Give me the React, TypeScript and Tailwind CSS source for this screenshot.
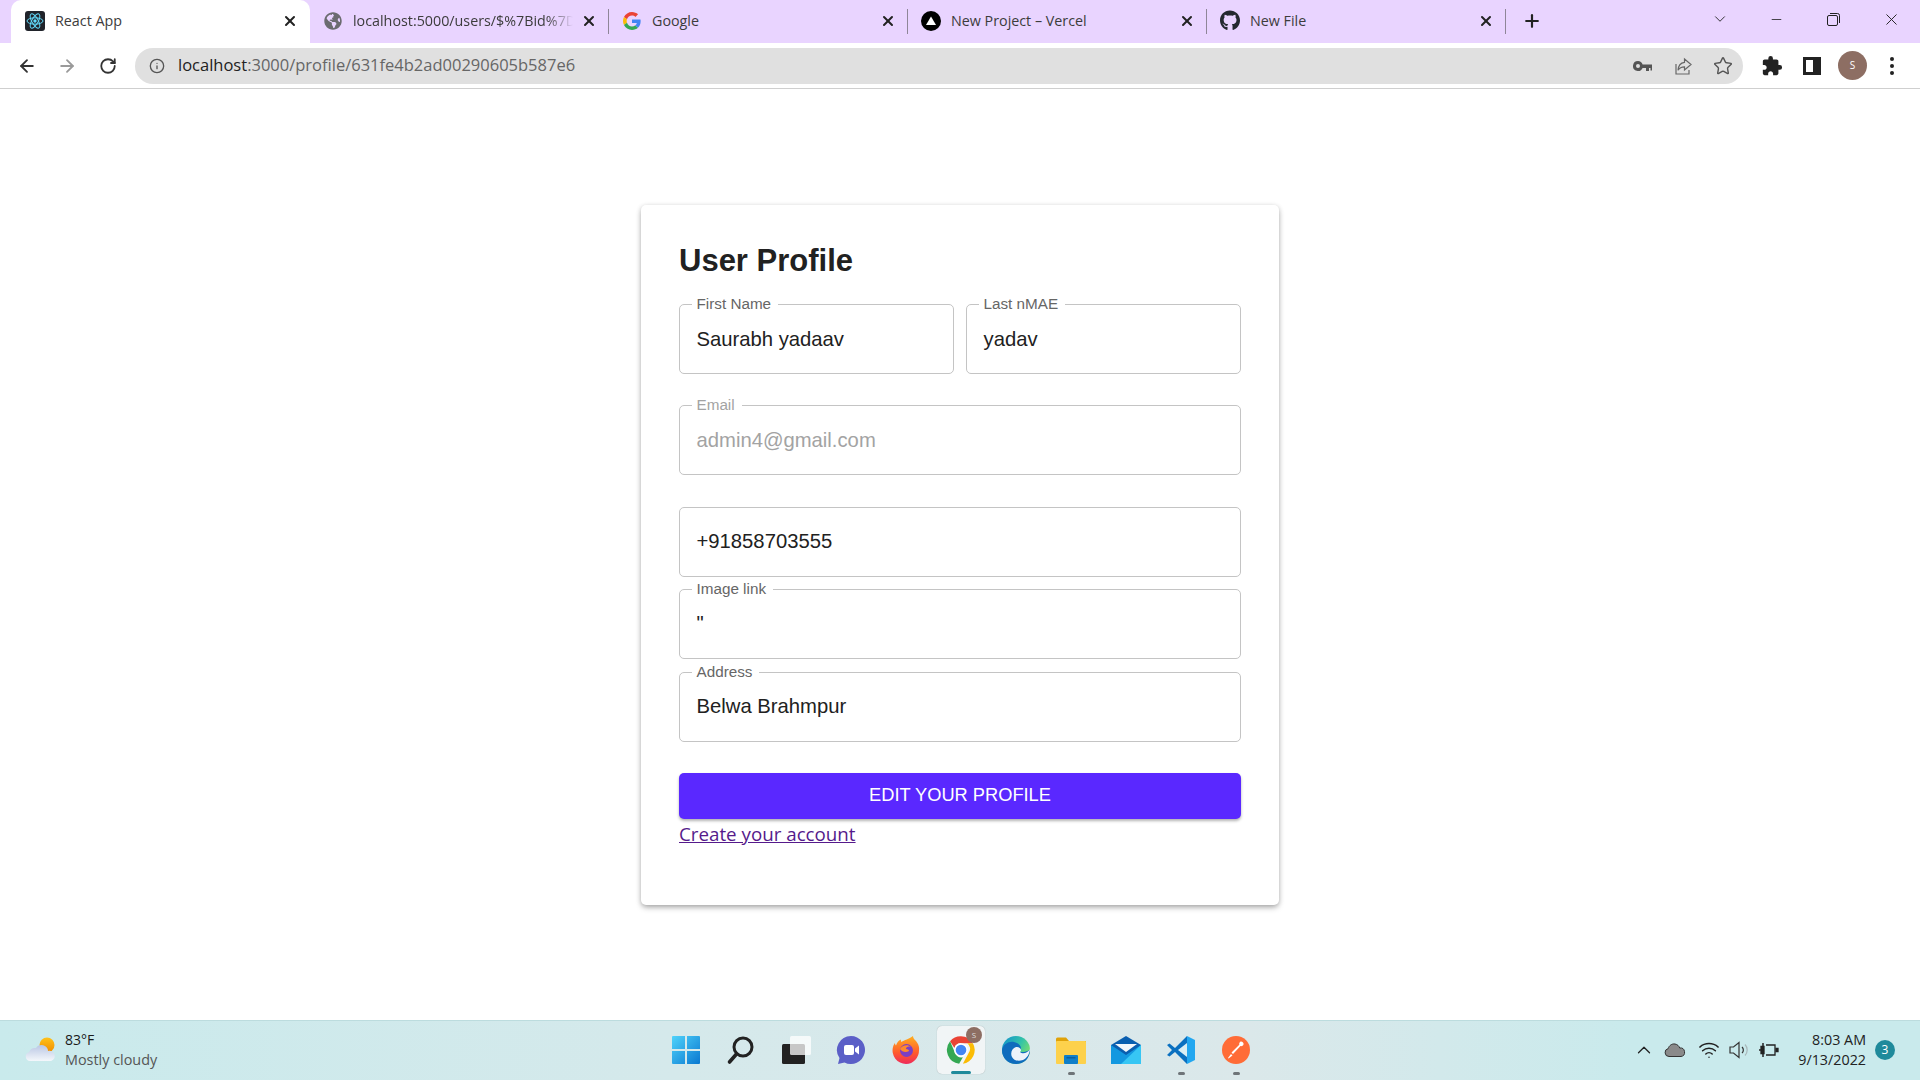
import { X, Plus, Minus, ArrowLeft, ArrowRight, RotateCw, Info, Star, ChevronDown, ChevronUp, Wifi } from "lucide-react";
import { FaGithub, FaGlobeAmericas } from "react-icons/fa";
import { MdExtension } from "react-icons/md";

const uiFont = "font-['Open_Sans',sans-serif]";
const formFont = "font-['Liberation_Sans',sans-serif]";

function ReactIcon() {
  return (
    <svg width="20" height="20" viewBox="0 0 20 20" className="rounded-[3px] bg-[#20232a]">
      <g fill="none" stroke="#61dafb" strokeWidth="1">
        <ellipse cx="10" cy="10" rx="8" ry="3.2" />
        <ellipse cx="10" cy="10" rx="8" ry="3.2" transform="rotate(60 10 10)" />
        <ellipse cx="10" cy="10" rx="8" ry="3.2" transform="rotate(120 10 10)" />
      </g>
      <circle cx="10" cy="10" r="1.7" fill="#61dafb" />
    </svg>
  );
}

function GoogleIcon() {
  return (
    <svg width="18" height="18" viewBox="0 0 48 48">
      <path fill="#EA4335" d="M24 9.5c3.5 0 6.700 1.200 9.200 3.600l6.900-6.900C35.900 2.400 30.500 0 24 0 14.600 0 6.500 5.400 2.600 13.200l8 6.200C12.500 13.700 17.800 9.500 24 9.500z" />
      <path fill="#4285F4" d="M47 24.500c0-1.600-.1-3.100-.4-4.500H24v9h12.900c-.6 3-2.200 5.500-4.700 7.200l7.700 6c4.500-4.200 7.100-10.300 7.100-17.700z" />
      <path fill="#FBBC05" d="M10.500 28.600c-.5-1.400-.8-3-.8-4.600s.3-3.200.8-4.600l-8-6.200C.9 16.500 0 20.100 0 24s.9 7.500 2.600 10.800l7.900-6.200z" />
      <path fill="#34A853" d="M24 48c6.500 0 11.900-2.100 15.900-5.800l-7.700-6c-2.200 1.500-4.900 2.300-8.200 2.300-6.200 0-11.500-4.200-13.400-9.900l-8 6.200C6.500 42.600 14.600 48 24 48z" />
    </svg>
  );
}

function VercelIcon() {
  return (
    <svg width="20" height="20" viewBox="0 0 20 20">
      <circle cx="10" cy="10" r="10" fill="#000" />
      <path d="M10 5.500 15 14H5z" fill="#fff" />
    </svg>
  );
}

function Tab({ icon, title, active, last, fade }: { icon: React.ReactNode; title: string; active?: boolean; last?: boolean; fade?: boolean }) {
  return (
    <div className={`relative flex h-[43px] w-[299px] shrink-0 items-center pb-[2px] pr-[12px] ${active ? "rounded-t-[10px] bg-white pl-[14px]" : "pl-[13px]"}`}>
      <span className="flex w-[20px] shrink-0 items-center justify-center">{icon}</span>
      <span className={`ml-[10px] min-w-0 flex-1 overflow-hidden whitespace-nowrap text-[14.3px] text-[#3c3c3c] ${fade ? "[mask-image:linear-gradient(90deg,#000_88%,transparent)]" : ""}`}>
        {title}
      </span>
      <X size={16} strokeWidth={3} className="ml-[8px] shrink-0 text-[#222]" />
      {!active && !last && <span className="absolute right-0 top-[9px] h-[25px] w-px bg-[#8f8698]" />}
    </div>
  );
}

function TabStrip() {
  return (
    <div className={`flex h-[43px] items-end bg-[#e9d4ff] pl-[11px] ${uiFont}`}>
      <Tab active icon={<ReactIcon />} title="React App" />
      <Tab fade icon={<FaGlobeAmericas size={18} className="text-[#6b6b70]" />} title="localhost:5000/users/$%7Bid%7D" />
      <Tab icon={<GoogleIcon />} title="Google" />
      <Tab icon={<VercelIcon />} title="New Project – Vercel" />
      <Tab icon={<FaGithub size={21} className="text-[#24292f]" />} title="New File" />
      <div className="flex h-[43px] w-[51px] shrink-0 items-center justify-center pb-[2px]">
        <Plus size={20} strokeWidth={2.6} className="text-[#222]" />
      </div>
      <div className="ml-auto flex h-[43px] items-center pb-[5px] text-[#222]">
        <ChevronDown size={18} strokeWidth={1.2} className="mr-[40px]" />
        <Minus size={15} strokeWidth={1.3} className="mr-[43px]" />
        <svg width="13" height="13" viewBox="0 0 13 13" fill="none" stroke="#222" className="mr-[42px]">
          <rect x="0.500" y="2.500" width="10" height="10" rx="1.500" />
          <path d="M3 .5h7.500a2 2 0 0 1 2 2V10" />
        </svg>
        <X size={19} strokeWidth={1.2} className="mr-[19px]" />
      </div>
    </div>
  );
}

function Toolbar() {
  return (
    <div className={`flex h-[46px] items-center border-b border-[#cfcfcf] bg-white ${uiFont}`}>
      <ArrowLeft size={20} strokeWidth={2.2} className="ml-[17px] text-[#333]" />
      <ArrowRight size={20} strokeWidth={2.2} className="ml-[20px] text-[#9a9a9a]" />
      <RotateCw size={18} strokeWidth={2.4} className="ml-[22px] text-[#333]" />
      <div className="ml-[18px] flex h-[36px] w-[1608px] items-center rounded-full bg-[#e0e0e0] pl-[14px] pr-[10px]">
        <Info size={16} strokeWidth={2} className="text-[#555]" />
        <span className="ml-[13px] text-[16.5px] text-[#666]">
          <span className="text-[#222]">localhost</span>:3000/profile/631fe4b2ad00290605b587e6
        </span>
        <svg width="20" height="12" viewBox="0 0 20 12" className="ml-auto text-[#555]" fill="currentColor">
          <path d="M5 1a5 5 0 1 0 4.600 7H13v3h3V8h1.500v2.500H19V4.500H9.600A5 5 0 0 0 5 1zm0 3a2 2 0 1 1 0 4 2 2 0 0 1 0-4z" />
        </svg>
        <svg width="20" height="20" viewBox="0 0 20 20" fill="none" stroke="#666" strokeWidth="1.200" className="ml-[20px]">
          <path d="M3 8v10h13v-4" />
          <path d="M11.500 3 18 8.500 11.500 14v-3.200c-3 0-5 .9-6.500 3.500.3-4.500 2.600-7.500 6.500-8z" />
        </svg>
        <Star size={20} strokeWidth={1.7} className="ml-[20px] text-[#555]" />
      </div>
      <MdExtension size={22} className="ml-[18px] text-[#222]" />
      <div className="ml-[20px] flex h-[18px] w-[18px] items-center justify-center border-[3px] border-[#222] bg-white pr-0">
        <span className="ml-auto h-full w-[5px] bg-[#222]" />
      </div>
      <div className="ml-[17px] flex h-[29px] w-[29px] items-center justify-center rounded-full bg-[#8d6e63] text-[10px] text-white">
        S
      </div>
      <div className="ml-[23px] flex flex-col gap-[3px]">
        <span className="h-[4px] w-[4px] rounded-full bg-[#222]" />
        <span className="h-[4px] w-[4px] rounded-full bg-[#222]" />
        <span className="h-[4px] w-[4px] rounded-full bg-[#222]" />
      </div>
    </div>
  );
}

function Field({ label, value, disabled, className }: { label?: string; value: string; disabled?: boolean; className?: string }) {
  return (
    <div className={`relative flex h-[70px] items-center rounded-[5px] border border-[#c4c4c4] pl-[16.5px] text-[20.25px] ${disabled ? "text-[#a3a3a3]" : "text-[#212121]"} ${className ?? ""}`}>
      {label && (
        <span className={`absolute left-[11.5px] top-[-10px] bg-white pl-[5px] pr-[7px] text-[15.25px] leading-[18px] ${disabled ? "text-[#a3a3a3]" : "text-[#666]"}`}>
          {label}
        </span>
      )}
      {value}
    </div>
  );
}

function ProfileCard() {
  return (
    <div className={`flex h-[700px] w-[638px] flex-col rounded-[5px] bg-white px-[38px] pt-[31px] shadow-[0_3px_6px_-1px_rgba(0,0,0,0.3),0_1px_5px_rgba(0,0,0,0.15)] ${formFont}`}>
      <h1 className="mb-[18px] h-[50px] text-[31px] font-bold leading-[50px] text-[#212121]">User Profile</h1>
      <div className="grid grid-cols-2 gap-[12px]">
        <Field label="First Name" value="Saurabh yadaav" />
        <Field label="Last nMAE" value="yadav" />
      </div>
      <Field className="mt-[31px]" label="Email" value="admin4@gmail.com" disabled />
      <Field className="mt-[32px] pb-[2px]" value="+91858703555" />
      <Field className="mt-[12px] !items-start pt-[18px]" label="Image link" value={'"'} />
      <Field className="mt-[13px] pb-[1px]" label="Address" value="Belwa Brahmpur" />
      <button className="mt-[31px] h-[46px] rounded-[5px] bg-[#5a28ff] pb-[2px] text-[18.25px] text-white shadow-[0_2px_3px_rgba(0,0,0,0.3)]">
        EDIT YOUR PROFILE
      </button>
      <a className={`mt-[1px] self-start text-[18.75px] leading-[28px] text-[#551a8b] underline ${uiFont}`}>Create your account</a>
    </div>
  );
}

function WeatherIcon() {
  return (
    <svg width="32" height="26" viewBox="0 0 32 26">
      <defs>
        <linearGradient id="sun" x1="0" y1="0" x2="0" y2="1">
          <stop offset="0" stopColor="#ffc21a" />
          <stop offset="1" stopColor="#f08c00" />
        </linearGradient>
        <linearGradient id="cloud" x1="0" y1="0" x2="0" y2="1">
          <stop offset="0" stopColor="#b9c6e4" />
          <stop offset="1" stopColor="#f4f7fb" />
        </linearGradient>
      </defs>
      <circle cx="22" cy="8" r="7.500" fill="url(#sun)" />
      <path d="M5 24a4.500 4.500 0 0 1-1-8.800C5 12 8 10.500 11 11c1.500-3 6-4 9-2 2 1.400 3 3 3 5a5 5 0 0 1 3 10z" fill="url(#cloud)" />
    </svg>
  );
}

function WindowsIcon() {
  return (
    <svg width="30" height="30" viewBox="0 0 30 30">
      <defs>
        <linearGradient id="win" x1="0" y1="0" x2="1" y2="1">
          <stop offset="0" stopColor="#4fd3fb" />
          <stop offset="1" stopColor="#0a78d0" />
        </linearGradient>
      </defs>
      <path fill="url(#win)" d="M1 2a1 1 0 0 1 1-1h12v13H1zM16 1h12a1 1 0 0 1 1 1v12H16zM1 16h13v13H2a1 1 0 0 1-1-1zM16 16h13v12a1 1 0 0 1-1 1H16z" />
    </svg>
  );
}

function SearchIcon() {
  return (
    <svg width="30" height="30" viewBox="0 0 30 30" fill="none" stroke="#222">
      <circle cx="17" cy="12" r="9" strokeWidth="3" />
      <path d="M10.500 19 3.500 27" strokeWidth="3.600" strokeLinecap="round" />
    </svg>
  );
}

function TaskViewIcon() {
  return (
    <svg width="30" height="30" viewBox="0 0 30 30">
      <rect x="1" y="9" width="23" height="20" rx="1.500" fill="#222" />
      <rect x="9" y="1" width="21" height="19" rx="1.500" fill="#fff" fillOpacity="0.75" />
    </svg>
  );
}

function ChatIcon() {
  return (
    <svg width="30" height="30" viewBox="0 0 30 30">
      <path d="M15 1a14 14 0 1 1-6.500 26.400L2 29l1.500-6A14 14 0 0 1 15 1z" fill="#5b5fc7" />
      <rect x="8" y="10" width="10" height="10" rx="2" fill="#fff" />
      <path d="m19 13.500 4-3v9l-4-3z" fill="#fff" />
    </svg>
  );
}

function FirefoxIcon() {
  return (
    <svg width="30" height="30" viewBox="0 0 30 30">
      <defs>
        <linearGradient id="ff" x1="0.500" y1="0" x2="0.500" y2="1">
          <stop offset="0" stopColor="#ffb01f" />
          <stop offset="0.600" stopColor="#ff5a2c" />
          <stop offset="1" stopColor="#ee2a5c" />
        </linearGradient>
      </defs>
      <path d="M15 29A13.500 13.500 0 0 1 2 12c.5-2 1.500-3.500 2-4 0 1 .5 2 1 2.500C6 7 8 5 10 4.500c-.3 1 0 2 .5 2.500C13 5 18 4 22 1c0 2 1 3 3 5 2.500 3 3.500 6 3 9A13.500 13.500 0 0 1 15 29z" fill="url(#ff)" />
      <circle cx="15.500" cy="15.500" r="6.500" fill="#7b3fc4" />
      <path d="M9 14c2-4 8-5 11-2-3-1-5 0-5 2 2 0 3 1 3 2-3 2-7 1-9-2z" fill="#ff8a2c" />
    </svg>
  );
}

function ChromeIcon() {
  return (
    <svg width="30" height="30" viewBox="0 0 48 48">
      <path fill="#EA4335" d="M24 2a22 22 0 0 1 19 11H24a11 11 0 0 0-10.500 7.700L6.500 10A22 22 0 0 1 24 2z" />
      <path fill="#FBBC05" d="M43 13a22 22 0 0 1-16 32.800L36 29a11 11 0 0 0-2-16z" />
      <path fill="#34A853" d="M6.500 10l8.500 20a11 11 0 0 0 12 5.500L21 45.800A22 22 0 0 1 6.500 10z" />
      <circle cx="24" cy="24" r="11" fill="#fff" />
      <circle cx="24" cy="24" r="8.500" fill="#4285F4" />
    </svg>
  );
}

function EdgeIcon() {
  return (
    <svg width="30" height="30" viewBox="0 0 30 30">
      <defs>
        <linearGradient id="edgeTop" x1="0" y1="0" x2="1" y2="0.600">
          <stop offset="0" stopColor="#0f8fd0" />
          <stop offset="0.600" stopColor="#33c3a8" />
          <stop offset="1" stopColor="#7fe06a" />
        </linearGradient>
      </defs>
      <circle cx="15" cy="15" r="14" fill="url(#edgeTop)" />
      <path d="M1 15c1-6 7-9 12-8 5 1 7 4 7 6.500 0 1.500-1 2.500-2 3 2 1 7 1 11-2 0 9-6 14.500-14 14.500C7 29 1 23 1 15z" fill="#0f6cbd" />
      <path d="M11 22c-2-4 0-9 4-10 2.500-.5 5 1 5 3 0 1-.5 1.500-1 2 2 2 7 2 10-3-.5 5-3 9-7 11-4 1.500-9 1-11-3z" fill="#fff" fillOpacity="0.92" />
    </svg>
  );
}

function FolderIcon() {
  return (
    <svg width="30" height="28" viewBox="0 0 30 28">
      <path d="M0 3a1.500 1.500 0 0 1 1.500-1.500H10L13 5h17v4H0z" fill="#e0a208" />
      <rect y="5" width="30" height="23" rx="1" fill="#fdd14c" />
      <rect x="8" y="19" width="14" height="9" rx="1" fill="#0f7fc9" />
      <rect x="10.500" y="21" width="9" height="1.500" fill="#0b5fa0" />
    </svg>
  );
}

function MailIcon() {
  return (
    <svg width="30" height="28" viewBox="0 0 30 28">
      <path d="M15 0 30 9v19H0V9z" fill="#0a5fb0" />
      <path d="M4 8h22l-11 8z" fill="#f4f7fb" />
      <path d="M0 9l15 10L30 9v19H0z" fill="#1398e0" />
      <path d="M30 9v19H10z" fill="#37c6f4" />
    </svg>
  );
}

function VSCodeIcon() {
  return (
    <svg width="30" height="30" viewBox="0 0 30 30">
      <path d="M21 1 9 13 3.500 8.500 1 10l5 5-5 5 2.500 1.500L9 17l12 12z" fill="#0a70c0" />
      <path d="M21 1l8 4v20l-8 4z" fill="#22a7f0" />
      <path d="M21 8v14l-9-7z" fill="#d9eef4" />
    </svg>
  );
}

function PostmanIcon() {
  return (
    <svg width="28" height="28" viewBox="0 0 28 28">
      <circle cx="14" cy="14" r="14" fill="#ff6c37" />
      <path d="M19 5.500c1.500 0 3 1.500 2.500 3-.5 1.200-2 2-3 1.500L11 18l-1.500-1.500 7.800-7.800c-.5-1.200.5-3.200 1.700-3.200zM9 18l1.500 1.500-4 3L6 22z" fill="#fff" />
    </svg>
  );
}

function Pinned({ children, dot, active }: { children: React.ReactNode; dot?: boolean; active?: boolean }) {
  return (
    <div className={`relative flex h-[48px] w-[48px] items-center justify-center rounded-[5px] ${active ? "bg-[#f1f5f6] shadow-[0_0_1px_rgba(0,0,0,0.3)]" : ""}`}>
      {children}
      {dot && <span className="absolute bottom-[-1px] h-[3px] w-[7px] rounded-full bg-[#6e7478]" />}
      {active && <span className="absolute bottom-[0px] h-[3px] w-[20px] rounded-full bg-[#1f8a9b]" />}
    </div>
  );
}

function Taskbar() {
  return (
    <div className={`grid h-[60px] grid-cols-[1fr_auto_1fr] items-center border-t border-[#bcdcde] bg-[linear-gradient(90deg,#c9eaec_0%,#d5e9eb_35%,#dbe8ea_65%,#c9eaec_85%)] pb-[2px] ${uiFont}`}>
      <div className="flex items-center pl-[25px]">
        <WeatherIcon />
        <div className="ml-[8px] flex flex-col leading-[20px]">
          <span className="text-[14px] text-[#1a1a1a]">83°F</span>
          <span className="text-[14.4px] text-[#555]">Mostly cloudy</span>
        </div>
      </div>
      <div className="flex items-center gap-[7px] pl-[2px]">
        <Pinned><WindowsIcon /></Pinned>
        <Pinned><SearchIcon /></Pinned>
        <Pinned><TaskViewIcon /></Pinned>
        <Pinned><ChatIcon /></Pinned>
        <Pinned><FirefoxIcon /></Pinned>
        <Pinned active>
          <ChromeIcon />
          <span className="absolute right-[3px] top-[1px] flex h-[16px] w-[16px] items-center justify-center rounded-full bg-[#8d6e63] text-[8px] text-[#ddd]">S</span>
        </Pinned>
        <Pinned><EdgeIcon /></Pinned>
        <Pinned dot><FolderIcon /></Pinned>
        <Pinned><MailIcon /></Pinned>
        <Pinned dot><VSCodeIcon /></Pinned>
        <Pinned dot><PostmanIcon /></Pinned>
      </div>
      <div className="flex items-center justify-end pr-[25px] text-[#222]">
        <ChevronUp size={22} strokeWidth={1.4} />
        <svg width="22" height="14" viewBox="0 0 22 14" className="ml-[9px]">
          <path d="M5 13.500a4 4 0 0 1-.8-7.900C5 2.500 8 .5 11 1c2.500.5 4 2 4.700 4A4.300 4.300 0 0 1 17 13.500z" fill="#8a8a8a" stroke="#333" strokeWidth="1" />
        </svg>
        <Wifi size={22} strokeWidth={1.6} className="ml-[12px]" />
        <svg width="22" height="18" viewBox="0 0 22 18" fill="none" stroke="#333" strokeWidth="1.200" className="ml-[9px]">
          <path d="M1 6h3.500L10 1.500v15L4.500 12H1z" />
          <path d="M13 6a4 4 0 0 1 0 6" />
          <path d="M16 3.500a8 8 0 0 1 0 11" stroke="#a9b8ba" />
        </svg>
        <svg width="22" height="16" viewBox="0 0 22 16" fill="none" stroke="#222" strokeWidth="1.300" className="ml-[7px]">
          <path d="M8 3h9v10H8" />
          <path d="M18 6.500h2v3h-2z" fill="#222" />
          <path d="M1 8h2" strokeWidth="1.500" />
          <path d="M3 4.500h3v7H3z" fill="#222" />
          <path d="M5 1v3.500M5 11.500V15" strokeWidth="1.500" />
        </svg>
        <div className="ml-[18px] flex flex-col items-end text-[14.3px] leading-[20px]">
          <span>8:03 AM</span>
          <span>9/13/2022</span>
        </div>
        <span className="ml-[9px] flex h-[20px] w-[20px] items-center justify-center rounded-full bg-[#1f8a9b] text-[12px] text-white">3</span>
      </div>
    </div>
  );
}

export default function App() {
  return (
    <div className="flex h-screen w-full flex-col overflow-hidden bg-white">
      <TabStrip />
      <Toolbar />
      <main className="flex flex-1 justify-center pt-[116px]">
        <ProfileCard />
      </main>
      <Taskbar />
    </div>
  );
}
